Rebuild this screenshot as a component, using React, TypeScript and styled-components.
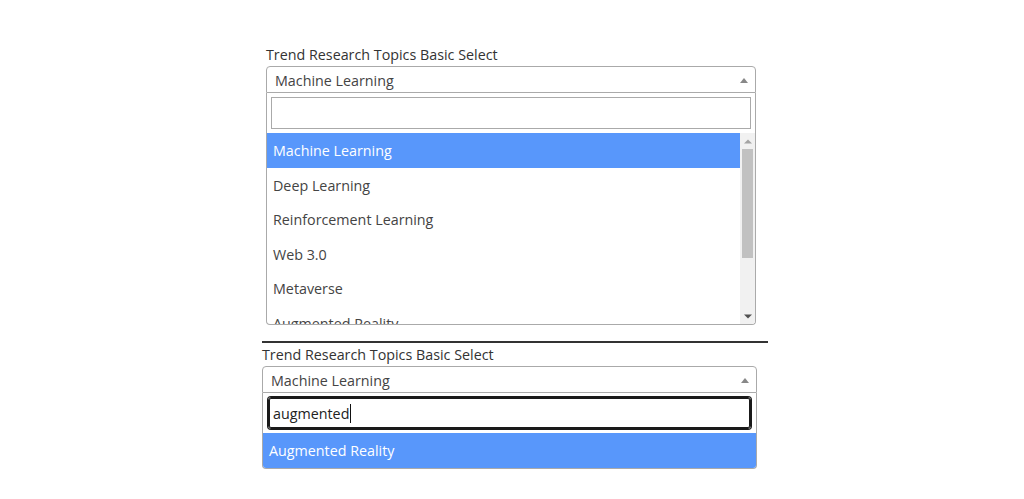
import React from "react";
import styled, { createGlobalStyle } from "styled-components";

const Global = createGlobalStyle`
  html, body { margin: 0; padding: 0; background: #fff; }
  body { font-family: "Open Sans", "Noto Sans", sans-serif; color: #333; }
  * { box-sizing: border-box; }
`;

const Page = styled.div`
  width: 506px;
  margin-left: 262px;
  padding-top: 45px;
`;

const Field = styled.div<{ $inset: number; $width: number }>`
  margin-left: ${(p) => p.$inset}px;
  width: ${(p) => p.$width}px;
`;

const Label = styled.div`
  height: 20px;
  margin-bottom: 1px;
  font-size: 14.3px;
  line-height: 20px;
  color: #333;
  white-space: nowrap;
`;

const Selection = styled.div`
  height: 27px;
  display: flex;
  align-items: center;
  justify-content: space-between;
  padding: 1px 0 0 8px;
  border: 1px solid #aaa;
  border-radius: 4px 4px 0 0;
  background: #fff;
  font-size: 14.3px;
  color: #444;
`;

const Arrow = styled.span`
  width: 20px;
  height: 24px;
  display: flex;
  align-items: center;
  justify-content: center;
  margin-right: 1px;
  &::before {
    content: "";
    border-style: solid;
    border-width: 0 4px 5px 4px;
    border-color: transparent transparent #888 transparent;
  }
`;

const Dropdown = styled.div`
  border: 1px solid #aaa;
  border-top: none;
  border-radius: 0 0 4px 4px;
  overflow: hidden;
  background: #fff;
`;

const SearchWrap = styled.div`
  padding: 4px;
`;

const SearchBox = styled.div<{ $focused?: boolean }>`
  height: 32px;
  display: flex;
  align-items: center;
  padding-left: 4px;
  border: 1px solid #aaa;
  border-radius: ${(p) => (p.$focused ? "3px" : "0")};
  box-shadow: ${(p) => (p.$focused ? "0 0 0 1px #1a1a1a, inset 0 0 0 1px #1a1a1a" : "none")};
  font-size: 14.3px;
  color: #222;
  ${(p) => (p.$focused ? "border-color: #1a1a1a; margin: 0 1px;" : "")}
`;

const Caret = styled.span`
  display: inline-block;
  width: 1px;
  height: 19px;
  background: #111;
  margin-left: 1px;
`;

const Results = styled.div<{ $height?: number }>`
  display: flex;
  height: ${(p) => (p.$height ? `${p.$height}px` : "auto")};
`;

const OptionList = styled.ul`
  flex: 1;
  margin: 0;
  padding: 0;
  list-style: none;
  overflow: hidden;
`;

const Option = styled.li<{ $active?: boolean }>`
  height: 34.5px;
  display: flex;
  align-items: center;
  padding: 1px 6px 0;
  font-size: 14.3px;
  white-space: nowrap;
  color: ${(p) => (p.$active ? "#fff" : "#444")};
  background: ${(p) => (p.$active ? "#5897fb" : "transparent")};
`;

const Scrollbar = styled.div`
  width: 15px;
  display: flex;
  flex-direction: column;
  background: #f1f1f1;
`;

const ScrollButton = styled.div`
  height: 16px;
  display: flex;
  align-items: center;
  justify-content: center;
`;

const Track = styled.div`
  flex: 1;
  padding: 0 2px;
`;

const Thumb = styled.div`
  height: 109px;
  background: #c1c1c1;
`;

const Divider = styled.hr`
  margin: 16px 0 2px;
  height: 2px;
  border: none;
  background: #333;
`;

const Tri = ({ up, color }: { up?: boolean; color: string }) => (
  <svg width="8" height="5" viewBox="0 0 8 5">
    <path d={up ? "M0 4.5 L4 0.5 L8 4.5 Z" : "M0 0.5 L8 0.5 L4 4.5 Z"} fill={color} />
  </svg>
);

const topics = [
  "Machine Learning",
  "Deep Learning",
  "Reinforcement Learning",
  "Web 3.0",
  "Metaverse",
  "Augmented Reality",
];

export default function App() {
  return (
    <>
      <Global />
      <Page>
        <Field $inset={4} $width={490}>
          <Label>Trend Research Topics Basic Select</Label>
          <Selection>
            Machine Learning
            <Arrow />
          </Selection>
          <Dropdown>
            <SearchWrap>
              <SearchBox />
            </SearchWrap>
            <Results $height={191}>
              <OptionList>
                {topics.map((t, i) => (
                  <Option key={t} $active={i === 0}>
                    {t}
                  </Option>
                ))}
              </OptionList>
              <Scrollbar>
                <ScrollButton>
                  <Tri up color="#a3a3a3" />
                </ScrollButton>
                <Track>
                  <Thumb />
                </Track>
                <ScrollButton>
                  <Tri color="#505050" />
                </ScrollButton>
              </Scrollbar>
            </Results>
          </Dropdown>
        </Field>
        <Divider />
        <Field $inset={0} $width={495}>
          <Label>Trend Research Topics Basic Select</Label>
          <Selection>
            Machine Learning
            <Arrow />
          </Selection>
          <Dropdown>
            <SearchWrap>
              <SearchBox $focused>
                augmented
                <Caret />
              </SearchBox>
            </SearchWrap>
            <Results>
              <OptionList>
                <Option $active>Augmented Reality</Option>
              </OptionList>
            </Results>
          </Dropdown>
        </Field>
      </Page>
    </>
  );
}
